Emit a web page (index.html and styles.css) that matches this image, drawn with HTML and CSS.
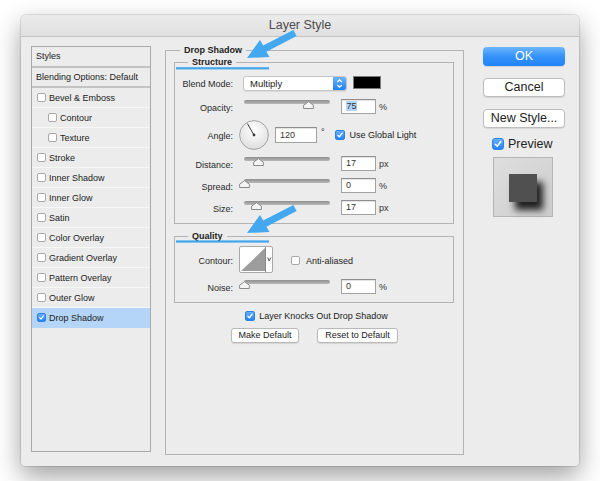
FILE: index.html
```html
<!DOCTYPE html>
<html>
<head>
<meta charset="utf-8">
<title>Layer Style</title>
<link rel="stylesheet" href="styles.css">
</head>
<body>
<div class="screen">
  <div class="window">
    <div class="titlebar">Layer Style</div>
    <div class="content">
      <div class="styles-list">
        <div class="list-head">Styles</div>
        <div class="list-blend">Blending Options: Default</div>
        <div class="item"><span class="cb"></span>Bevel &amp; Emboss</div>
        <div class="item sub"><span class="cb"></span>Contour</div>
        <div class="item sub"><span class="cb"></span>Texture</div>
        <div class="item"><span class="cb"></span>Stroke</div>
        <div class="item"><span class="cb"></span>Inner Shadow</div>
        <div class="item"><span class="cb"></span>Inner Glow</div>
        <div class="item"><span class="cb"></span>Satin</div>
        <div class="item"><span class="cb"></span>Color Overlay</div>
        <div class="item"><span class="cb"></span>Gradient Overlay</div>
        <div class="item"><span class="cb"></span>Pattern Overlay</div>
        <div class="item"><span class="cb"></span>Outer Glow</div>
        <div class="item selected"><span class="cb on"><svg viewBox="0 0 10 10"><polyline points="2.3,5.3 4.2,7.2 7.7,2.7"/></svg></span>Drop Shadow</div>
      </div>

      <div class="main">
        <div class="legend">Drop Shadow</div>

        <div class="group structure">
          <div class="legend legend-inner">Structure</div>

          <div class="row blend-row">
            <span class="label">Blend Mode:</span>
            <div class="select">
              <span class="select-text">Multiply</span>
              <span class="stepper"><svg width="13" height="15" viewBox="0 0 13 15"><polyline points="4.2,6 6.5,3.8 8.8,6"/><polyline points="4.2,9 6.5,11.2 8.8,9"/></svg></span>
            </div>
            <span class="color-swatch"></span>
          </div>

          <div class="row r-opacity">
            <span class="label">Opacity:</span>
            <div class="slider"><span class="track"></span><span class="thumb" style="left:64px"><svg width="11" height="8" viewBox="0 0 11 8"><path d="M5.5 0.6 L10.4 4.2 V7.5 H0.6 V4.2 Z"/></svg></span></div>
            <span class="num"><span class="hl">75</span></span>
            <span class="unit">%</span>
          </div>

          <div class="row r-angle">
            <span class="label">Angle:</span>
            <svg class="dial" width="30" height="30" viewBox="0 0 30 30">
              <defs><radialGradient id="dialg" cx="50%" cy="35%" r="65%"><stop offset="0" stop-color="#ffffff"/><stop offset="1" stop-color="#dedede"/></radialGradient></defs>
              <circle cx="15" cy="15" r="14.4" fill="url(#dialg)" stroke="#a3a3a3"/>
              <line x1="15" y1="15" x2="8.4" y2="3.6" stroke="#3a3a3a" stroke-width="1"/>
              <circle cx="15" cy="15" r="1.4" fill="#3a3a3a"/>
            </svg>
            <span class="num num-angle">120</span>
            <span class="deg">°</span>
            <span class="cb on cb-global"><svg viewBox="0 0 10 10"><polyline points="2.3,5.3 4.2,7.2 7.7,2.7"/></svg></span>
            <span class="cb-text">Use Global Light</span>
          </div>

          <div class="row r-distance">
            <span class="label">Distance:</span>
            <div class="slider"><span class="track"></span><span class="thumb" style="left:14px"><svg width="11" height="8" viewBox="0 0 11 8"><path d="M5.5 0.6 L10.4 4.2 V7.5 H0.6 V4.2 Z"/></svg></span></div>
            <span class="num">17</span>
            <span class="unit">px</span>
          </div>

          <div class="row r-spread">
            <span class="label">Spread:</span>
            <div class="slider"><span class="track"></span><span class="thumb" style="left:0px"><svg width="11" height="8" viewBox="0 0 11 8"><path d="M5.5 0.6 L10.4 4.2 V7.5 H0.6 V4.2 Z"/></svg></span></div>
            <span class="num">0</span>
            <span class="unit">%</span>
          </div>

          <div class="row r-size">
            <span class="label">Size:</span>
            <div class="slider"><span class="track"></span><span class="thumb" style="left:12px"><svg width="11" height="8" viewBox="0 0 11 8"><path d="M5.5 0.6 L10.4 4.2 V7.5 H0.6 V4.2 Z"/></svg></span></div>
            <span class="num">17</span>
            <span class="unit">px</span>
          </div>
        </div>

        <div class="group quality">
          <div class="legend legend-inner">Quality</div>

          <div class="row r-contour">
            <span class="label">Contour:</span>
            <svg class="contour" width="34" height="27" viewBox="0 0 34 27">
              <rect x="0.5" y="0.5" width="33" height="26" rx="1.5" fill="#ffffff" stroke="#a9a9a9"/>
              <polygon points="2,25 26,2 26,25" fill="#9d9d9d"/>
              <line x1="26.5" y1="1" x2="26.5" y2="26" stroke="#8a8a8a"/>
              <polyline points="28.6,11.5 30.2,15 31.8,11.5" fill="none" stroke="#444" stroke-width="0.9"/>
            </svg>
            <span class="cb cb-anti"></span>
            <span class="cb-text">Anti-aliased</span>
          </div>

          <div class="row r-noise">
            <span class="label">Noise:</span>
            <div class="slider"><span class="track"></span><span class="thumb" style="left:0px"><svg width="11" height="8" viewBox="0 0 11 8"><path d="M5.5 0.6 L10.4 4.2 V7.5 H0.6 V4.2 Z"/></svg></span></div>
            <span class="num">0</span>
            <span class="unit">%</span>
          </div>
        </div>

        <div class="knock-row">
          <span class="cb on"><svg viewBox="0 0 10 10"><polyline points="2.3,5.3 4.2,7.2 7.7,2.7"/></svg></span>
          <span class="cb-text">Layer Knocks Out Drop Shadow</span>
        </div>

        <div class="btn-row">
          <span class="small-btn btn-make">Make Default</span>
          <span class="small-btn btn-reset">Reset to Default</span>
        </div>
      </div>

      <div class="side">
        <div class="btn btn-ok">OK</div>
        <div class="btn btn-plain">Cancel</div>
        <div class="btn btn-plain">New Style...</div>
        <div class="preview-row">
          <span class="cb on cb-preview"><svg viewBox="0 0 10 10"><polyline points="2.3,5.3 4.2,7.2 7.7,2.7"/></svg></span>
          <span class="preview-text">Preview</span>
        </div>
        <div class="preview-box"><span class="preview-square"></span></div>
      </div>
    </div>
  </div>

  <svg class="annot" width="600" height="481" viewBox="0 0 600 481">
    <rect x="176" y="67.2" width="93" height="2.2" fill="#3fa6ee"/>
    <rect x="176" y="240.4" width="93" height="2.2" fill="#3fa6ee"/>
    <polygon points="247,58 269.5,57 266.4,51.8 296.6,36.1 293.4,29.9 263.2,45.6 260,40" fill="#43a8ef"/>
    <polygon points="247,58 269.5,57 266.4,51.8 296.6,36.1 293.4,29.9 263.2,45.6 260,40" fill="#43a8ef" transform="translate(0,175)"/>
  </svg>
</div>
</body>
</html>
```

FILE: styles.css
```css
* { box-sizing: border-box; }

html, body {
  margin: 0;
  padding: 0;
  background: #ffffff;
}

body {
  font-family: "Liberation Sans", Arial, sans-serif;
  font-size: 9px;
  color: #222222;
}

.screen {
  position: relative;
  width: 600px;
  height: 481px;
  padding: 15px 21px 0;
  overflow: hidden;
}

.window {
  width: 558px;
  height: 451px;
  background: #ececec;
  border-radius: 5px 5px 4px 4px;
  box-shadow: 0 0 0 1px rgba(0, 0, 0, 0.10), 0 10px 26px rgba(0, 0, 0, 0.38);
  display: flex;
  flex-direction: column;
  overflow: hidden;
}

.titlebar {
  flex: none;
  height: 22px;
  border-bottom: 1px solid #c4c4c4;
  background: linear-gradient(#ebebeb, #e0e0e0);
  text-align: center;
  font-size: 12.5px;
  line-height: 21px;
  color: #4b4b4b;
}

.content {
  flex: 1;
  display: flex;
  align-items: flex-start;
  padding: 9px 14px 0 10px;
}

/* ---------- styles list ---------- */
.styles-list {
  flex: none;
  width: 120px;
  height: 406px;
  border: 1px solid #a9a9a9;
}

.list-head {
  height: 21px;
  line-height: 19px;
  padding-left: 4px;
  border-bottom: 2px solid #c3c3c3;
}

.list-blend {
  height: 20px;
  line-height: 18px;
  padding-left: 4px;
  border-bottom: 2px solid #c3c3c3;
}

.item {
  height: 20px;
  display: flex;
  align-items: center;
  padding-left: 5px;
  border-bottom: 1px solid #f7f7f7;
}

.item.sub { padding-left: 16px; }

.item.selected { background: #b5d5f8; border-bottom-color: #b5d5f8; }

.item .cb { width: 9px; height: 9px; margin-right: 3px; }

/* ---------- checkbox ---------- */
.cb {
  flex: none;
  display: inline-block;
  width: 10px;
  height: 10px;
  border: 1px solid #a8a8a8;
  border-radius: 2px;
  background: #ffffff;
}

.cb.on {
  border-color: #2f7fe6;
  background: linear-gradient(#64b0fb, #2584f5);
}

.cb svg {
  display: block;
  width: 100%;
  height: 100%;
}

.cb svg polyline {
  fill: none;
  stroke: #ffffff;
  stroke-width: 1.6;
  stroke-linecap: round;
  stroke-linejoin: round;
}

.cb-text { margin-left: 5px; }

/* ---------- main panel ---------- */
.main {
  flex: none;
  width: 299px;
  height: 405px;
  margin: 4px 0 0 14px;
  border: 1px solid #b3b3b3;
}

.legend {
  width: max-content;
  height: 11px;
  line-height: 11px;
  margin: -6px 0 0 14px;
  padding: 0 4px;
  background: #ececec;
  font-weight: bold;
  color: #222222;
}

.legend-inner { margin-left: 13px; }

.group {
  margin: 6px 9px 0 8px;
  border: 1px solid #b3b3b3;
}

.structure { padding-bottom: 8px; }

.quality { margin-top: 12px; padding-bottom: 8px; }

.row {
  display: flex;
  align-items: center;
  height: 15px;
}

.label {
  flex: none;
  width: 58px;
  margin-right: 6px;
  text-align: right;
  padding-top: 2px;
  color: #2a2a2a;
}

.blend-row { margin-top: 8px; align-items: flex-start; }
.blend-row .label { line-height: 13px; }
.r-opacity { margin-top: 8px; }
.r-angle { margin-top: 6px; height: 30px; }
.r-distance { margin-top: 6px; }
.r-spread { margin-top: 7px; }
.r-size { margin-top: 7px; }
.r-contour { margin-top: 4px; height: 27px; }
.r-noise { margin-top: 6px; }

/* select */
.select {
  flex: none;
  display: flex;
  width: 104px;
  height: 15px;
  margin-left: 4px;
  border: 1px solid #c6c6c6;
  border-radius: 3px;
  background: #ffffff;
  box-shadow: 0 1px 1px rgba(0, 0, 0, 0.08);
  overflow: hidden;
}

.select-text {
  flex: 1;
  padding-left: 6px;
  font-size: 9.5px;
  line-height: 13px;
  color: #222;
}

.stepper {
  flex: none;
  width: 13px;
  background: linear-gradient(#6cb4fb, #1f80f4);
}

.stepper svg { display: block; margin-top: -1px; }

.stepper polyline {
  fill: none;
  stroke: #ffffff;
  stroke-width: 1.1;
}

.color-swatch {
  flex: none;
  width: 28px;
  height: 13px;
  margin-left: 6px;
  background: #000000;
  border: 1px solid #7a7a7a;
}

/* slider */
.slider {
  position: relative;
  flex: none;
  width: 97px;
  height: 15px;
}

.track {
  display: block;
  height: 4px;
  margin: 1px 6px 0 5px;
  border-radius: 2px;
  background: linear-gradient(#8f8f8f, #b9b9b9);
}

.thumb {
  position: absolute;
  top: 2px;
  width: 11px;
  height: 8px;
}

.thumb svg { display: block; }

.thumb path {
  fill: #f4f4f4;
  stroke: #8a8a8a;
  stroke-width: 1;
}

/* number fields */
.num {
  flex: none;
  width: 35px;
  height: 15px;
  margin-left: 5px;
  padding-left: 4px;
  border: 1px solid #a2a2a2;
  border-top-color: #8e8e8e;
  background: #ffffff;
  box-shadow: inset 0 1px 1px rgba(0, 0, 0, 0.12);
  line-height: 13px;
  color: #333;
}

.hl {
  background: #b3d5fe;
  padding: 0 0.5px;
}

.unit { margin-left: 3px; color: #333; }

.dial { flex: none; display: block; }

.num-angle {
  width: 42px;
  height: 16px;
  margin-left: 6px;
  line-height: 14px;
}

.deg { margin-left: 4px; align-self: flex-start; margin-top: 8px; line-height: 9px; }

.cb-global { margin-left: 10px; }

.contour { flex: none; display: block; }

.cb-anti { width: 9px; height: 9px; margin-left: 18px; margin-top: 2px; }
.r-contour .cb-text { margin-left: 6px; padding-top: 2px; }

.knock-row {
  display: flex;
  align-items: center;
  justify-content: center;
  height: 10px;
  margin-top: 8px;
  padding-left: 4px;
}

.knock-row .cb-text { margin-left: 4px; }

.btn-row {
  display: flex;
  justify-content: center;
  gap: 18px;
  margin-top: 7px;
}

.small-btn {
  display: block;
  height: 15px;
  line-height: 13px;
  text-align: center;
  background: #ffffff;
  border: 1px solid #b9b9b9;
  border-radius: 3px;
  box-shadow: 0 1px 1px rgba(0, 0, 0, 0.10);
  color: #222;
}

.btn-make { width: 68px; }
.btn-reset { width: 81px; }

/* ---------- right column ---------- */
.side {
  flex: none;
  width: 82px;
  margin-left: 19px;
  padding-top: 1px;
  display: flex;
  flex-direction: column;
}

.btn {
  height: 19px;
  border-radius: 4px;
  text-align: center;
  font-size: 12.5px;
  line-height: 19px;
}

.btn-ok {
  background: linear-gradient(#6cb6fc, #3592fa 50%, #1f83f7);
  color: #ffffff;
  box-shadow: 0 1px 1px rgba(0, 0, 0, 0.12);
}

.btn-plain {
  margin-top: 12px;
  background: #ffffff;
  border: 1px solid #bdbdbd;
  line-height: 17px;
  color: #222;
  box-shadow: 0 1px 1px rgba(0, 0, 0, 0.10);
}

.preview-row {
  display: flex;
  align-items: center;
  height: 12px;
  margin: 10px 0 0 9px;
}

.cb-preview { width: 12px; height: 12px; border-radius: 3px; }

.preview-text {
  margin-left: 4px;
  font-size: 12.5px;
  line-height: 12px;
  color: #222;
}

.preview-box {
  width: 60px;
  height: 60px;
  margin: 7px 0 0 10px;
  border: 1px solid #b5b5b5;
  background: linear-gradient(135deg, #dedede, #cdcdcd);
  display: flex;
  align-items: center;
  justify-content: center;
}

.preview-square {
  display: block;
  width: 28px;
  height: 28px;
  margin-top: 2px;
  background: #505050;
  box-shadow: 6px 8px 7px rgba(0, 0, 0, 0.85);
}

/* ---------- annotations ---------- */
.annot {
  position: absolute;
  top: 0;
  left: 0;
  pointer-events: none;
}
```
